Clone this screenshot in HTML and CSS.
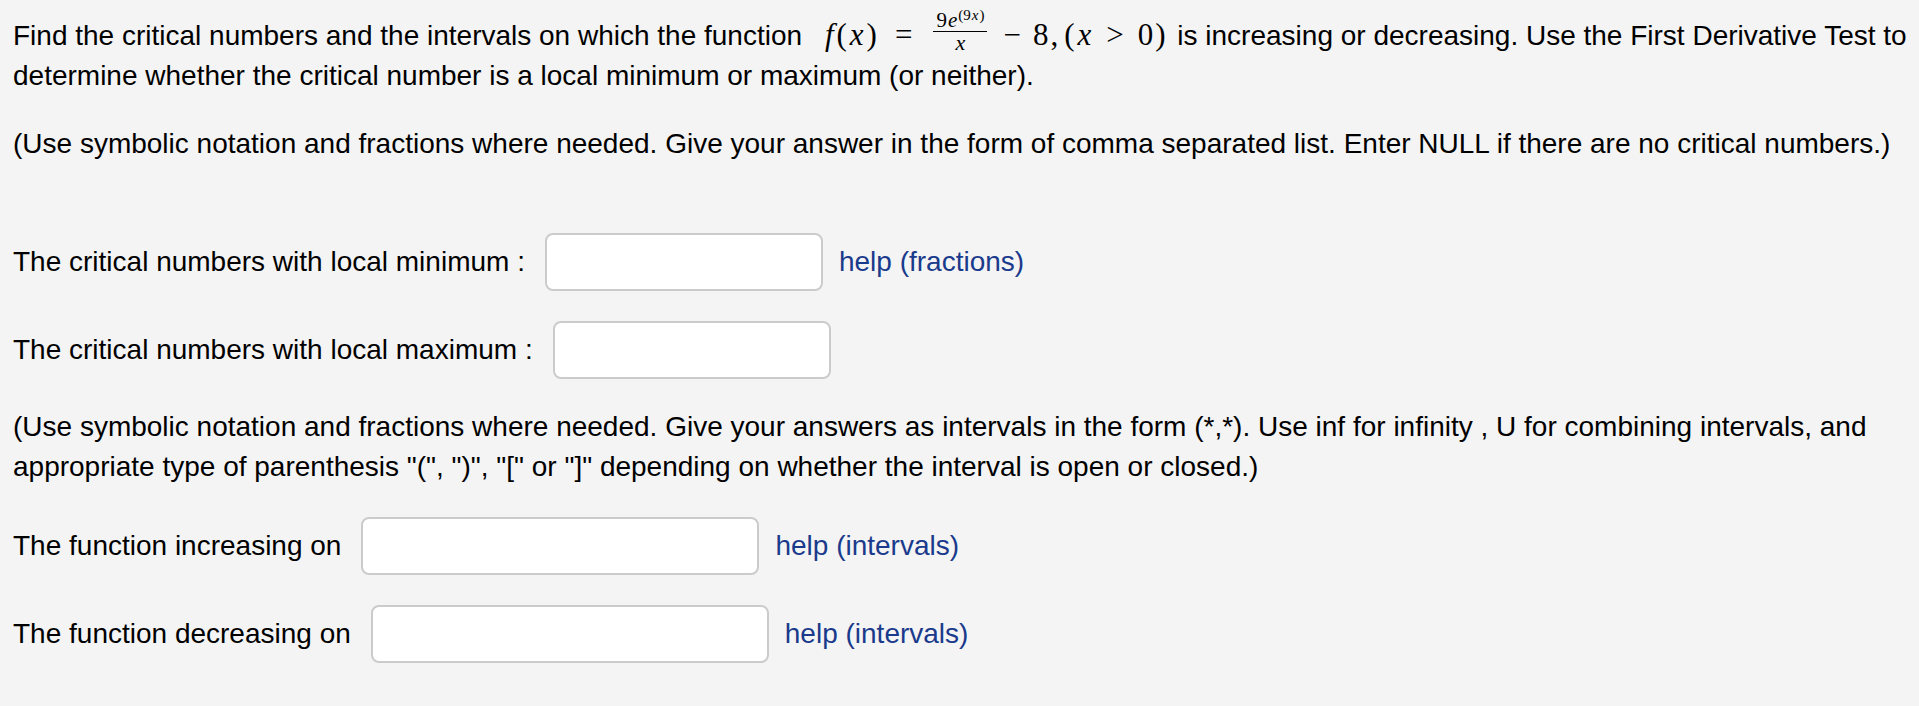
FILE: index.html
```html
<!DOCTYPE html>
<html lang="en">

<head>
    <meta charset="UTF-8">
    <meta name="viewport" content="width=device-width, initial-scale=1.0">
    <title>Critical numbers</title>
    <link rel="stylesheet" href="styles.css">
</head>

<body>
    <div class="problem">
        <p class="txt">Find the critical numbers and the intervals on which the function
            <span class="math"><i>f</i>(<i>x</i>)<span class="op eq">=</span><span class="frac"><span class="num">9<i>e</i><sup>(9<i>x</i>)</sup></span><span class="den"><i>x</i></span></span><span class="op minus">&minus;</span>8,<span class="sp"></span>(<i>x</i><span class="op gt">&gt;</span>0)</span>
            is increasing or decreasing. Use the First Derivative Test to determine whether the critical number is a local minimum or maximum (or neither).</p>

        <p class="txt note">(Use symbolic notation and fractions where needed. Give your answer in the form of comma separated list. Enter NULL if there are no critical numbers.)</p>

        <div class="row first">
            <span>The critical numbers with local minimum :</span>
            <input class="ans short" type="text">
            <a class="help" href="#">help (fractions)</a>
        </div>
        <div class="row">
            <span>The critical numbers with local maximum :</span>
            <input class="ans short" type="text">
        </div>

        <p class="txt note">(Use symbolic notation and fractions where needed. Give your answers as intervals in the form (*,*). Use inf for infinity , U for combining intervals, and appropriate type of parenthesis "(", ")", "[" or "]" depending on whether the interval is open or closed.)</p>

        <div class="row">
            <span>The function increasing on</span>
            <input class="ans long" type="text">
            <a class="help" href="#">help (intervals)</a>
        </div>
        <div class="row last">
            <span>The function decreasing on</span>
            <input class="ans long" type="text">
            <a class="help" href="#">help (intervals)</a>
        </div>
    </div>
</body>

</html>
```

FILE: styles.css
```css
body {
    margin: 0;
    background-color: #f4f4f4;
    color: #000;
    font-family: "Liberation Sans", Arial, sans-serif;
    font-size: 28px;
    line-height: 40px;
}

.problem {
    padding: 10px 0 0 13px;
}

.txt {
    margin: 0;
}

.note {
    margin-top: 28px;
}

/* math bits */
.math {
    font-family: "Liberation Serif", "Times New Roman", serif;
    font-size: 31px;
    letter-spacing: 2px;
    margin: 0 2px 0 14px;
}

.math i {
    font-style: italic;
    padding: 0 1px;
}

.op.eq {
    margin: 0 18px 0 16px;
}

.op.minus {
    margin: 0 10px 0 15px;
}

.op.gt {
    margin: 0 12px;
}

.sp {
    margin-left: 4px;
}

.frac {
    display: inline-flex;
    flex-direction: column;
    align-items: center;
    vertical-align: 18px;
    margin: 0 1px;
    letter-spacing: 0;
}

.num {
    font-size: 21px;
    line-height: 20px;
    padding: 0 3px 1px;
    border-bottom: 1px solid #000;
}

.num sup {
    font-size: 15px;
    line-height: 0;
    vertical-align: 7px;
}

.den {
    font-size: 22px;
    line-height: 21px;
}

/* answer rows */
.row {
    display: flex;
    align-items: center;
    margin-top: 30px;
}

.row.first {
    margin-top: 69px;
}

.ans {
    box-sizing: border-box;
    height: 58px;
    margin: 0 16px 0 20px;
    padding: 0 10px;
    border: 2px solid #cbcbcb;
    border-radius: 8px;
    background-color: #fff;
    font-family: inherit;
    font-size: 26px;
}

.short {
    width: 278px;
}

.long {
    width: 398px;
}

.help {
    color: #1a3a8c;
    text-decoration: none;
}
```
